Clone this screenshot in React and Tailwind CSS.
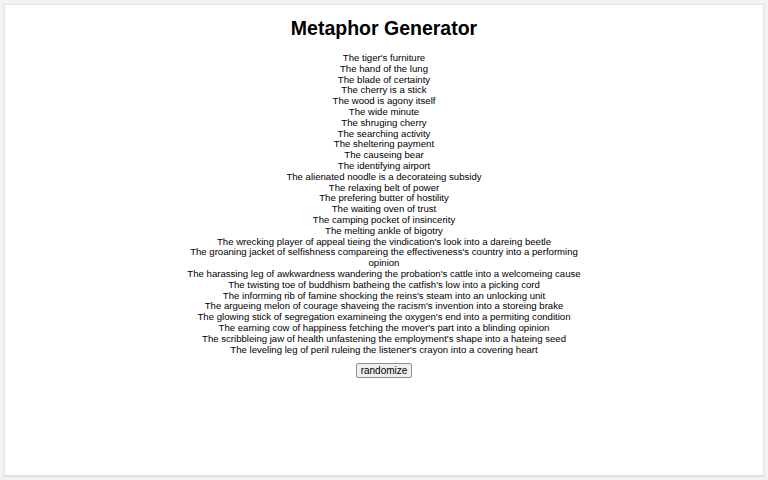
import React, { useState } from 'react';

const nouns = ['tiger', 'hand', 'blade', 'cherry', 'wood', 'minute', 'bear', 'airport', 'noodle', 'belt', 'butter', 'oven', 'pocket', 'ankle'];

const initial = [
  "The tiger's furniture",
  'The hand of the lung',
  'The blade of certainty',
  'The cherry is a stick',
  'The wood is agony itself',
  'The wide minute',
  'The shruging cherry',
  'The searching activity',
  'The sheltering payment',
  'The causeing bear',
  'The identifying airport',
  'The alienated noodle is a decorateing subsidy',
  'The relaxing belt of power',
  'The prefering butter of hostility',
  'The waiting oven of trust',
  'The camping pocket of insincerity',
  'The melting ankle of bigotry',
  "The wrecking player of appeal tieing the vindication's look into a dareing beetle",
  "The groaning jacket of selfishness compareing the effectiveness's country into a performing opinion",
  "The harassing leg of awkwardness wandering the probation's cattle into a welcomeing cause",
  "The twisting toe of buddhism batheing the catfish's low into a picking cord",
  "The informing rib of famine shocking the reins's steam into an unlocking unit",
  "The argueing melon of courage shaveing the racism's invention into a storeing brake",
  "The glowing stick of segregation examineing the oxygen's end into a permiting condition",
  "The earning cow of happiness fetching the mover's part into a blinding opinion",
  "The scribbleing jaw of health unfastening the employment's shape into a hateing seed",
  "The leveling leg of peril ruleing the listener's crayon into a covering heart",
];

const App = () => {
  const [lines, setLines] = useState(initial);

  // shuffle the list and swap a couple of nouns around
  const randomize = () => {
    const next = [...lines].sort(() => Math.random() - 0.5).map((l) => {
      const n = nouns[Math.floor(Math.random() * nouns.length)];
      return l.replace(/^The (\w+)/, `The ${n}`);
    });
    setLines(next);
  };

  return (
    <div className="min-h-screen bg-[#f3f3f3] p-[4px] font-['Liberation_Sans',Arial,sans-serif] text-black">
      <div className="h-[472px] bg-white border border-[#e2e2e2] shadow-[0_1px_2px_rgba(0,0,0,0.08)] flex flex-col items-center">
        <h1 className="mt-[11px] text-[19.5px] font-bold leading-[24px]">Metaphor Generator</h1>
        <div className="mt-[13px] max-w-[410px] text-center text-[9.6px] leading-[10.8px]">
          {lines.map((l, i) => (
            <div key={i}>{l}</div>
          ))}
        </div>
        <button
          onClick={randomize}
          className="mt-[8px] px-[4px] h-[15px] text-[10px] leading-[12px] bg-[#efefef] border border-[#8f8f8f] rounded-[2px]"
        >
          randomize
        </button>
      </div>
    </div>
  );
};

export default App;
